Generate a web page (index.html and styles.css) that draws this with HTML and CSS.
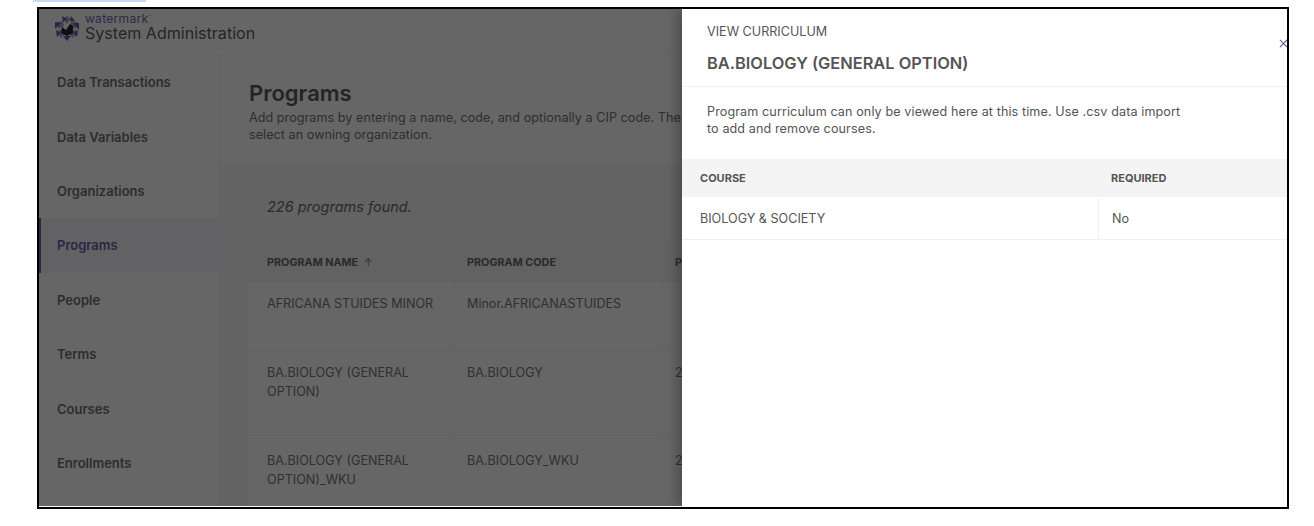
FILE: index.html
```html
<!DOCTYPE html>
<html lang="en">
<head>
<meta charset="utf-8">
<title>Programs</title>
<link rel="stylesheet" href="styles.css">
</head>
<body>
<div class="tab-mark"></div>
<div class="frame">
  <div class="app">
    <header class="topbar">
      <svg class="logo" viewBox="0 0 26 26" aria-hidden="true">
        <g class="facet-light">
          <path d="M13 1l4 3-4 5-4-5z"/>
          <path d="M3 7l6-1 1 5-6 3z"/>
          <path d="M23 7l-6-1-1 5 6 3z"/>
          <path d="M3 16l6-2 2 5-4 4z"/>
          <path d="M23 16l-6-2-2 5 4 4z"/>
        </g>
        <g class="facet-dark">
          <path d="M8 1l5 3-4 3z"/>
          <path d="M17 1l4 5-5 0z"/>
          <path d="M1 7l6 1-6 6z"/>
          <path d="M25 8l-6 0 6 7z"/>
          <path d="M2 15l5 3-4 4z"/>
          <path d="M24 15l-5 3 4 4z"/>
          <path d="M9 21l8 0-4 5z"/>
        </g>
        <path class="facet-core" d="M8 12l4 3 4-6 3 2v7l-6 3-6-3z"/>
      </svg>
      <div class="brand">
        <span class="brand-name">watermark<sup>™</sup></span>
        <span class="brand-title">System Administration</span>
      </div>
    </header>
    <div class="body">
      <nav class="side">
        <a class="nav-item">Data Transactions</a>
        <a class="nav-item">Data Variables</a>
        <a class="nav-item">Organizations</a>
        <a class="nav-item active">Programs</a>
        <a class="nav-item">People</a>
        <a class="nav-item">Terms</a>
        <a class="nav-item">Courses</a>
        <a class="nav-item">Enrollments</a>
      </nav>
      <main class="main">
        <section class="intro">
          <h1>Programs</h1>
          <p>Add programs by entering a name, code, and optionally a CIP code. Then select an owning organization.</p>
        </section>
        <section class="list">
          <p class="count">226 programs found.</p>
          <div class="table">
            <div class="row head">
              <div class="cell c1">PROGRAM NAME <span class="arrow">↑</span></div>
              <div class="cell c2">PROGRAM CODE</div>
              <div class="cell c3">PROGRAM</div>
            </div>
            <div class="row r1">
              <div class="cell c1">AFRICANA STUIDES MINOR</div>
              <div class="cell c2">Minor.AFRICANASTUIDES</div>
              <div class="cell c3"></div>
            </div>
            <div class="row r2">
              <div class="cell c1">BA.BIOLOGY (GENERAL OPTION)</div>
              <div class="cell c2">BA.BIOLOGY</div>
              <div class="cell c3">2</div>
            </div>
            <div class="row r3">
              <div class="cell c1">BA.BIOLOGY (GENERAL OPTION)_WKU</div>
              <div class="cell c2">BA.BIOLOGY_WKU</div>
              <div class="cell c3">2</div>
            </div>
          </div>
        </section>
      </main>
    </div>
    <div class="scrim"></div>
    <aside class="drawer">
      <button class="close" aria-label="Close">
        <svg viewBox="0 0 10 10"><path d="M1 1l8 8M9 1l-8 8"/></svg>
      </button>
      <div class="drawer-head">
        <div class="eyebrow">VIEW CURRICULUM</div>
        <h2>BA.BIOLOGY (GENERAL OPTION)</h2>
      </div>
      <p class="note">Program curriculum can only be viewed here at this time. Use .csv data import to add and remove courses.</p>
      <div class="d-row d-head">
        <div class="d-course">COURSE</div>
        <div class="d-req">REQUIRED</div>
      </div>
      <div class="d-row d-data">
        <div class="d-course">BIOLOGY &amp; SOCIETY</div>
        <div class="d-req">No</div>
      </div>
    </aside>
  </div>
</div>
</body>
</html>
```
FILE: styles.css
```css
* { box-sizing: border-box; }
html, body { margin: 0; padding: 0; background: #fff; }
body {
  height: 526px;
  overflow: hidden;
  font-family: Inter, "Liberation Sans", sans-serif;
  color: #555;
}
.tab-mark { width: 113px; height: 2px; margin-left: 33px; background: #c9daf8; }
.frame {
  width: 1252px;
  height: 502px;
  margin: 5px 0 0 37px;
  padding-bottom: 1px;
  background: #fff;
  border: 2px solid #000;
  overflow: hidden;
}
.app {
  position: relative;
  height: 100%;
  background: #fff;
  overflow: hidden;
}
.topbar {
  height: 46px;
  display: flex;
  align-items: center;
  gap: 5px;
  padding: 0 0 8px 15px;
  background: #fff;
  border-bottom: 1px solid #f4f4f4;
}
.logo { width: 26px; height: 26px; flex: none; }
.facet-light { fill: #a9a6bd; }
.facet-dark { fill: #6d58b5; }
.facet-core { fill: #2a2738; }
.brand { display: flex; flex-direction: column; }
.brand-name { font-size: 12px; line-height: 11px; color: #7a66b8; letter-spacing: .3px; }
.brand-name sup { font-size: 4px; vertical-align: 5px; line-height: 0; }
.brand-title { font-size: 16px; line-height: 18px; letter-spacing: .03px; color: #5c5c66; }
.body { display: flex; height: 451px; }
.side { width: 181px; flex: none; background: #fff; border-right: 1px solid #f2f2f2; }
.nav-item {
  display: flex;
  align-items: center;
  height: 54.4px;
  padding-left: 18px;
  font-size: 13px;
  font-weight: 600;
  color: #727272;
}
.nav-item.active {
  background: #f6f5fa;
  color: #6f60a8;
  border-left: 2px solid #6a5fb0;
  padding-left: 16px;
}
.main { flex: 1; min-width: 0; background: #f8f8f8; }
.intro { height: 110px; padding: 25px 0 0 29px; background: #fff; border-bottom: 1px solid #f6f6f6; }
.intro h1 { margin: 0; font-size: 22px; line-height: 26px; font-weight: 600; color: #5a5a5a; }
.intro p { margin: 3px 0 0; width: 445px; font-size: 12.6px; line-height: 17px; letter-spacing: .05px; color: #747474; }
.list { padding: 32px 0 0 28px; }
.count { margin: 0 0 26px 19px; font-size: 14.5px; line-height: 20px; font-style: italic; color: #6a6a6a; }
.row { display: flex; width: 700px; }
.cell { font-size: 12.6px; line-height: 19.3px; color: #787878; background: #fff; }
.c1 { width: 206px; padding-left: 19px; padding-right: 10px; }
.c2 { width: 207px; margin-left: 1px; padding-left: 12px; }
.c3 { flex: 1; margin-left: 1px; padding-left: 12px; }
.head { height: 39px; }
.head .cell { background: #f4f4f4; font-size: 10.8px; font-weight: 700; line-height: 39px; color: #6a6a6a; }
.arrow { font-weight: 400; margin-left: 3px; color: #777; }
.r1 { height: 67px; }
.r1 .cell { padding-top: 12px; }
.r2 { height: 88px; margin-top: 1px; }
.r2 .cell { padding-top: 13px; }
.r3 { height: 80px; margin-top: 1px; }
.r3 .cell { padding-top: 12px; }
.scrim {
  position: absolute;
  inset: 0;
  background: rgba(0,0,0,.6);
}
.drawer {
  position: absolute;
  top: 0;
  right: 0;
  bottom: 0;
  width: 605px;
  background: #fff;
  box-shadow: -6px 0 10px rgba(0,0,0,.22);
}
.close {
  position: absolute;
  top: 30px;
  right: -1px;
  width: 9px;
  height: 9px;
  padding: 0;
  border: 0;
  background: none;
}
.close svg { display: block; width: 9px; height: 9px; fill: none; stroke: #5b5a9a; stroke-width: 1.2; }
.drawer-head { height: 78px; padding: 14px 0 0 25px; border-bottom: 1px solid #f0f0f0; }
.eyebrow { font-size: 12.6px; line-height: 18px; color: #555; }
h2 { margin: 11px 0 0; font-size: 16.4px; line-height: 22px; font-weight: 600; color: #555; }
.note { margin: 0; height: 72px; padding: 16px 100px 0 25px; font-size: 12.6px; line-height: 17px; letter-spacing: .1px; color: #555; }
.d-row { display: flex; }
.d-head { height: 38px; align-items: center; background: #f4f4f4; font-size: 11px; font-weight: 700; color: #555; }
.d-data { height: 43px; padding-top: 1px; border-bottom: 1px solid #f0f0f0; font-size: 12.6px; color: #555; }
.d-course { width: 417px; padding-left: 18px; }
.d-req { flex: 1; padding-left: 12px; }
.d-data .d-course, .d-data .d-req { display: flex; align-items: center; }
.d-data .d-course { border-right: 1px solid #f0f0f0; }
.d-data .d-req { padding-left: 13px; }
```
